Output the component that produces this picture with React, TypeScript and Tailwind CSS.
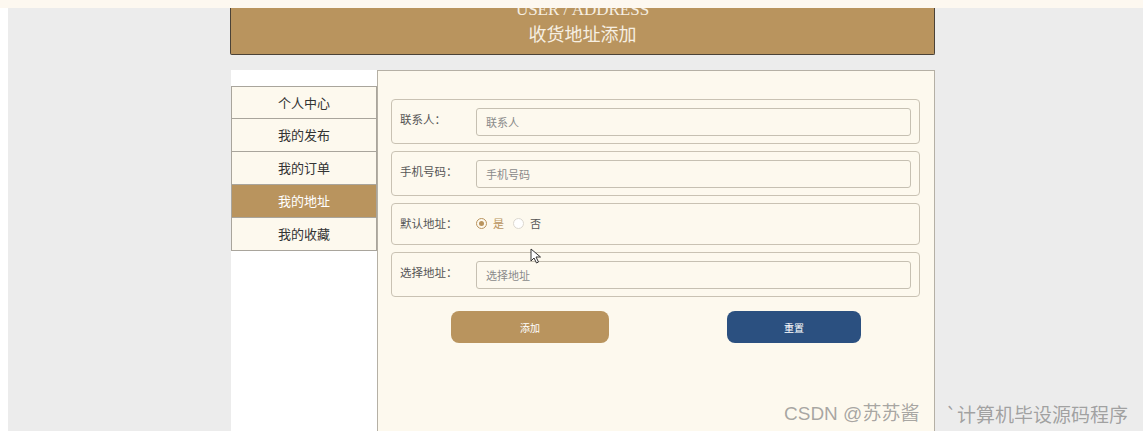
import React from "react";

const cjk = { fontFamily: '"Noto Sans CJK SC", "Noto Sans", sans-serif' };
const serif = { fontFamily: '"Liberation Serif", "Noto Sans CJK SC", serif' };

function Field({ label, placeholder }: { label: string; placeholder: string }) {
  return (
    <div className="flex items-start h-[45px] border border-[#c9c2b3] rounded-[4px] pt-[8px] pl-[8px] pr-[8px]">
      <div className="w-[76px] h-[28px] leading-[22px] text-[11.5px] text-[#555]">{label}</div>
      <div className="flex-1 h-[28px] border border-[#c6c0b2] rounded-[3px] flex items-center pl-[9px] text-[11px] text-[#8a8a8a]">
        {placeholder}
      </div>
    </div>
  );
}

export default function App() {
  const items = ["个人中心", "我的发布", "我的订单", "我的地址", "我的收藏"];
  return (
    <div className="relative w-[1143px] h-[434px] overflow-hidden bg-white" style={cjk}>
      <div className="h-[8px] bg-[#fdf8f0]" />
      <div className="flex h-[423px]">
        <div className="w-[8px] bg-white" />
        <div className="flex-1 bg-[#ececec] pl-[222px]">
          <div className="w-[705px] flex flex-col h-full">
            {/* header */}
            <div className="h-[47px] bg-[#b9945e] border-l border-r border-b border-[#4b4237] rounded-b-[2px] flex flex-col items-center overflow-hidden">
              <div className="-mt-[8px] leading-[20px] text-[17px] text-[#f6efe2]" style={serif}>USER / ADDRESS</div>
              <div className="mt-[5px] leading-[20px] text-[18px] text-[#f6efe2]" style={serif}>收货地址添加</div>
            </div>
            <div className="flex flex-1 mt-[15px]">
              {/* sidebar */}
              <div className="w-[146px] ml-[1px] bg-white pt-[16px]">
                {items.map((t, i) => (
                  <div
                    key={t}
                    className={
                      "h-[33px] flex items-center justify-center text-[13px] border-l border-r border-b border-[#a9a59c] " +
                      (i === 0 ? "border-t " : "") +
                      (t === "我的地址" ? "bg-[#b9945e] text-white" : "bg-[#fdf9ee] text-[#333]")
                    }
                  >
                    {t}
                  </div>
                ))}
              </div>
              {/* main panel */}
              <div className="flex-1 bg-[#fdf9ee] border-l border-t border-r border-[#b5b0a5] pt-[28px] pl-[13px] pr-[14px]">
                <div className="flex flex-col gap-[7px]">
                  <Field label="联系人：" placeholder="联系人" />
                  <Field label="手机号码：" placeholder="手机号码" />
                  <div className="flex items-start h-[42px] border border-[#c9c2b3] rounded-[4px] pt-[8px] pl-[8px] pr-[8px]">
                    <div className="w-[76px] h-[28px] leading-[22px] text-[11.5px] text-[#555]">默认地址：</div>
                    <div className="flex items-center h-[22px] text-[11px]">
                      <span className="w-[11px] h-[11px] rounded-full border border-[#b9945e] flex items-center justify-center">
                        <span className="w-[5px] h-[5px] rounded-full bg-[#b9945e]" />
                      </span>
                      <span className="ml-[6px] text-[#b9945e]">是</span>
                      <span className="ml-[9px] w-[11px] h-[11px] rounded-full border border-[#dcd8d0] bg-white" />
                      <span className="ml-[6px] text-[#555]">否</span>
                    </div>
                  </div>
                  <Field label="选择地址：" placeholder="选择地址" />
                </div>
                <div className="flex mt-[14px]">
                  <div className="ml-[60px] w-[158px] h-[32px] rounded-[8px] bg-[#b9945e] flex items-center justify-center text-[10px] text-white">
                    添加
                  </div>
                  <div className="ml-[118px] w-[134px] h-[32px] rounded-[8px] bg-[#2b5080] flex items-center justify-center text-[10px] text-white">
                    重置
                  </div>
                </div>
              </div>
            </div>
          </div>
        </div>
      </div>
      <div className="h-[3px] bg-white" />

      {/* cursor */}
      <svg className="absolute left-[530px] top-[248px]" width="12" height="16" viewBox="0 0 12 16">
        <path d="M1 1 L1 13 L4 10 L6.5 15 L8.5 14 L6 9 L10.5 9 Z" fill="#fff" stroke="#333" strokeWidth="1" strokeLinejoin="round" />
      </svg>

      {/* watermark */}
      <div className="absolute left-[784px] top-[402px] flex items-center text-[19px] leading-[24px] whitespace-nowrap text-[rgba(110,110,110,0.6)]">
        <span style={{ fontFamily: '"Liberation Sans", "Noto Sans CJK SC", sans-serif' }}>CSDN @苏苏酱</span>
        <span className="ml-[26px]">`计算机毕设源码程序</span>
      </div>
    </div>
  );
}
